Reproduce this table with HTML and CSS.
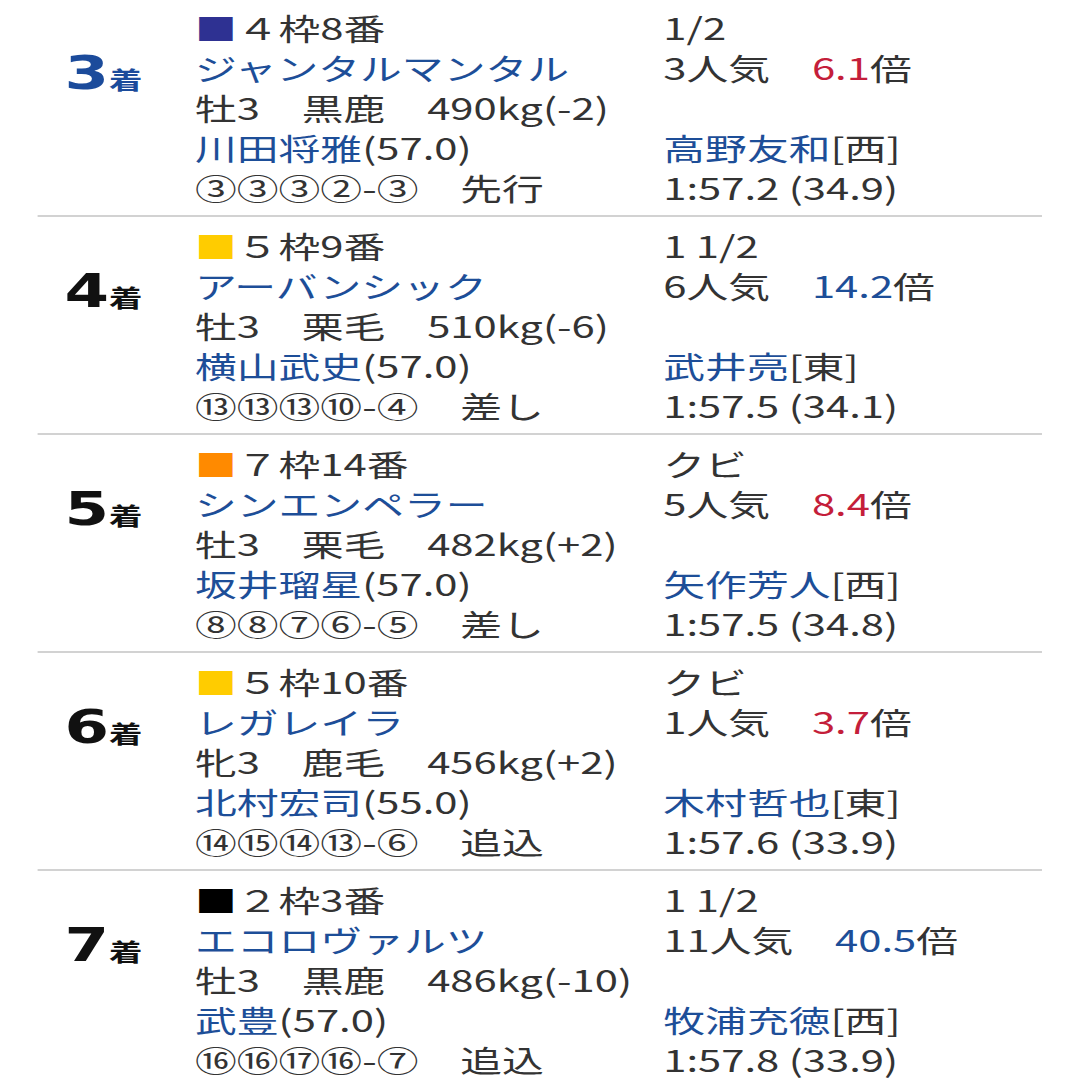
FILE: index.html
```html
<!DOCTYPE html>
<html lang="ja">
<head>
<meta charset="utf-8">
<title>レース結果</title>
<link rel="stylesheet" href="styles.css">
</head>
<body>
<div class="page">
  <div class="row">
    <div class="rank rank-blue">3<span class="chaku">着</span></div>
    <div class="main">
      <div class="line"><span class="waku waku-blue">■</span>４枠8番</div>
      <div class="line link">ジャンタルマンタル</div>
      <div class="line">牡3　黒鹿　490kg(-2)</div>
      <div class="line"><span class="link">川田将雅</span>(57.0)</div>
      <div class="line">③③③②-③　先行</div>
    </div>
    <div class="side">
      <div class="line">1/2</div>
      <div class="line">3人気　<span class="odds-red">6.1</span>倍</div>
      <div class="line"></div>
      <div class="line"><span class="link">高野友和</span>[西]</div>
      <div class="line">1:57.2 (34.9)</div>
    </div>
  </div>
  <div class="row">
    <div class="rank">4<span class="chaku">着</span></div>
    <div class="main">
      <div class="line"><span class="waku waku-yellow">■</span>５枠9番</div>
      <div class="line link">アーバンシック</div>
      <div class="line">牡3　栗毛　510kg(-6)</div>
      <div class="line"><span class="link">横山武史</span>(57.0)</div>
      <div class="line">⑬⑬⑬⑩-④　差し</div>
    </div>
    <div class="side">
      <div class="line">1 1/2</div>
      <div class="line">6人気　<span class="odds-blue">14.2</span>倍</div>
      <div class="line"></div>
      <div class="line"><span class="link">武井亮</span>[東]</div>
      <div class="line">1:57.5 (34.1)</div>
    </div>
  </div>
  <div class="row">
    <div class="rank">5<span class="chaku">着</span></div>
    <div class="main">
      <div class="line"><span class="waku waku-orange">■</span>７枠14番</div>
      <div class="line link">シンエンペラー</div>
      <div class="line">牡3　栗毛　482kg(+2)</div>
      <div class="line"><span class="link">坂井瑠星</span>(57.0)</div>
      <div class="line">⑧⑧⑦⑥-⑤　差し</div>
    </div>
    <div class="side">
      <div class="line">クビ</div>
      <div class="line">5人気　<span class="odds-red">8.4</span>倍</div>
      <div class="line"></div>
      <div class="line"><span class="link">矢作芳人</span>[西]</div>
      <div class="line">1:57.5 (34.8)</div>
    </div>
  </div>
  <div class="row">
    <div class="rank">6<span class="chaku">着</span></div>
    <div class="main">
      <div class="line"><span class="waku waku-yellow">■</span>５枠10番</div>
      <div class="line link">レガレイラ</div>
      <div class="line">牝3　鹿毛　456kg(+2)</div>
      <div class="line"><span class="link">北村宏司</span>(55.0)</div>
      <div class="line">⑭⑮⑭⑬-⑥　追込</div>
    </div>
    <div class="side">
      <div class="line">クビ</div>
      <div class="line">1人気　<span class="odds-red">3.7</span>倍</div>
      <div class="line"></div>
      <div class="line"><span class="link">木村哲也</span>[東]</div>
      <div class="line">1:57.6 (33.9)</div>
    </div>
  </div>
  <div class="row">
    <div class="rank">7<span class="chaku">着</span></div>
    <div class="main">
      <div class="line"><span class="waku waku-black">■</span>２枠3番</div>
      <div class="line link">エコロヴァルツ</div>
      <div class="line">牡3　黒鹿　486kg(-10)</div>
      <div class="line"><span class="link">武豊</span>(57.0)</div>
      <div class="line">⑯⑯⑰⑯-⑦　追込</div>
    </div>
    <div class="side">
      <div class="line">1 1/2</div>
      <div class="line">11人気　<span class="odds-blue">40.5</span>倍</div>
      <div class="line"></div>
      <div class="line"><span class="link">牧浦充徳</span>[西]</div>
      <div class="line">1:57.8 (33.9)</div>
    </div>
  </div>
</div>
</body>
</html>
```

FILE: styles.css
```css
html, body {
  margin: 0;
  padding: 0;
  background: #ffffff;
  overflow: hidden;
}

body {
  width: 1080px;
  height: 1080px;
  font-family: "Noto Sans CJK JP", "Noto Sans", sans-serif;
  color: #333333;
}

.page {
  width: 775.3px;
  margin-top: -1px;
  transform: scaleX(1.393);
  transform-origin: 0 0;
}

.row {
  display: grid;
  grid-template-columns: 112.7px 336.2px 1fr;
  margin: 0 27.3px;
  padding: 8px 0 8px;
  border-bottom: 2px solid #d2d2d2;
}

.row:last-child {
  border-bottom: none;
}

.rank {
  padding-left: 19px;
  padding-top: 43px;
  font-family: "DejaVu Sans", "Noto Sans CJK JP", sans-serif;
  font-size: 46px;
  line-height: 46px;
  font-weight: 700;
  color: #111111;
  white-space: nowrap;
}

.rank-blue {
  color: #1b4b9b;
}

.chaku {
  font-family: "Noto Sans CJK JP", sans-serif;
  font-size: 24px;
  font-weight: 700;
}

.line {
  height: 40px;
  font-size: 30px;
  line-height: 40px;
  white-space: nowrap;
}

.link {
  color: #1d4e98;
}

.waku-blue { color: #2e3192; }
.waku-yellow { color: #ffcc00; }
.waku-orange { color: #ff8a00; }
.waku-black { color: #000000; }

.odds-red { color: #c41e3a; }
.odds-blue { color: #1d4e98; }
```
